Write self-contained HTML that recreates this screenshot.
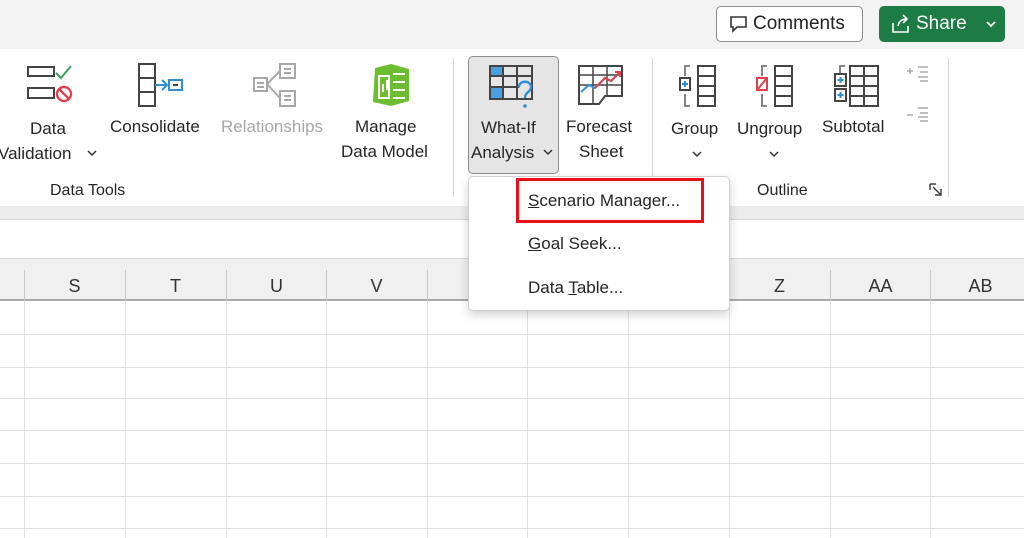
<!DOCTYPE html>
<html><head><meta charset="utf-8"><style>
*{margin:0;padding:0;box-sizing:border-box}
body{width:1024px;height:538px;overflow:hidden;position:relative;background:#fff;font-family:"Liberation Sans",sans-serif;color:#262626}
.a{position:absolute}
.t{position:absolute;font-size:17px;line-height:25px;text-align:center;white-space:nowrap}
.c{position:absolute;top:276px;font-size:18px;width:101px;text-align:center;color:#333}
.vl{position:absolute;top:301px;bottom:0;width:1px;background:#e1e1e1}
.hl{position:absolute;left:0;right:0;height:1px;background:#e1e1e1}
.hv{position:absolute;top:270px;height:31px;width:1px;background:#c8c8c8}
.ch{position:absolute}
</style></head><body>
<div class="a" style="left:0;top:0;width:1024px;height:49px;background:#f3f3f3"></div>
<div class="a" style="left:716px;top:6px;width:147px;height:36px;border:1px solid #8d8d8d;border-radius:5px;background:#fff"></div>
<svg class="a" style="left:729px;top:15px" width="20" height="18"><path d="M2 2h15v10H8l-4 4v-4H2z" fill="none" stroke="#333" stroke-width="1.6"/></svg>
<div class="t" style="left:753px;top:11px;font-size:19px;color:#222">Comments</div>
<div class="a" style="left:879px;top:6px;width:126px;height:36px;border-radius:5px;background:#1d7b44"></div>
<svg class="a" style="left:890px;top:14px" width="22" height="20"><path d="M3 9v9h15v-6M8 12c1-5 4-7 9-7M13 1l4 4-4 4" fill="none" stroke="#fff" stroke-width="1.6"/></svg>
<div class="t" style="left:916px;top:11px;font-size:19px;color:#fff">Share</div>
<svg class="a" style="left:985px;top:20px" width="12" height="8"><path d="M2 2l4 4 4-4" fill="none" stroke="#fff" stroke-width="1.8"/></svg>

<div class="a" style="left:0;top:49px;width:1024px;height:157px;background:#fff;box-shadow:0 2px 3px rgba(0,0,0,.15)"></div>
<div class="a" style="left:0;top:206px;width:1024px;height:14px;background:#ececec"></div>
<div class="a" style="left:0;top:219px;width:1024px;height:1px;background:#d6d6d6"></div>
<div class="a" style="left:0;top:220px;width:1024px;height:38px;background:#fff"></div>
<div class="a" style="left:0;top:258px;width:1024px;height:1px;background:#d6d6d6"></div>
<div class="a" style="left:0;top:259px;width:1024px;height:42px;background:#f0f0f0;border-bottom:2px solid #a8a8a8"></div>

<svg class="a" style="left:26px;top:63px" width="52" height="45"><path d="M2 4h26v9H2z" fill="none" stroke="#444" stroke-width="2"/><path d="M30 10l5 5 10-12" fill="none" stroke="#3ca55c" stroke-width="2"/><path d="M2 25h26v10H2z" fill="none" stroke="#444" stroke-width="2"/><circle cx="38" cy="31" r="7" fill="none" stroke="#e0424d" stroke-width="2.4"/><path d="M33 26l10 10" stroke="#e0424d" stroke-width="2.4"/></svg>
<div class="t" style="left:30px;top:116px">Data</div>
<div class="t" style="left:-2px;top:141px">Validation</div>
<svg class="ch" style="left:87px;top:150px" width="10" height="7"><path d="M1 1l4 4 4-4" fill="none" stroke="#333" stroke-width="1.5"/></svg>
<svg class="a" style="left:136px;top:62px" width="50" height="45"><path d="M3 2h16v14H3zM3 16h16v14H3zM3 30h16v14H3z" fill="none" stroke="#444" stroke-width="2"/><path d="M19 23h12M26 18l5 5-5 5" fill="none" stroke="#2e8fd6" stroke-width="2"/><path d="M33 18h13v10H33z" fill="none" stroke="#2e8fd6" stroke-width="2"/><path d="M37 23h5" stroke="#444" stroke-width="2"/></svg>
<div class="t" style="left:110px;top:114px">Consolidate</div>
<svg class="a" style="left:252px;top:62px" width="48" height="46"><g fill="none" stroke="#a8a8a8" stroke-width="2"><path d="M2 16h13v13H2zM28 2h15v14H28zM28 29h15v15H28zM15 22l13-13M15 22l13 14"/><path d="M5 21h7M5 25h7M32 7h7M32 11h7M32 34h7M32 38h7"/></g></svg>
<div class="t" style="left:221px;top:114px;color:#a8a8a8">Relationships</div>
<svg class="a" style="left:367px;top:62px" width="46" height="46"><path d="M8 6l16-4 18 5v32l-18 5L6 40z" fill="#6cbd2f"/><path d="M12 14h10v22H12zM26 12h12M26 20h12M26 28h12M26 36h12" fill="none" stroke="#fff" stroke-width="2"/><path d="M16 22v8M20 18v10" stroke="#fff" stroke-width="2"/></svg>
<div class="t" style="left:355px;top:114px">Manage</div>
<div class="t" style="left:341px;top:139px">Data Model</div>
<div class="a" style="left:453px;top:58px;width:1px;height:139px;background:#d4d4d4"></div>

<div class="a" style="left:468px;top:56px;width:91px;height:118px;background:#e5e5e5;border:1.5px solid #8c8c8c;border-radius:5px"></div>
<svg class="a" style="left:489px;top:65px" width="52" height="48"><path d="M1 1h13v10H1zM1 22h13v12H1z" fill="#4a9fe0"/><path d="M1 1h42v33H1zM14 1v33M28 1v33M1 11h42M1 22h42" fill="none" stroke="#444" stroke-width="2"/><path d="M30 22c0-7 12-7 12 0 0 5-6 5-6 11" fill="#e5e5e5" stroke="#2e8fd6" stroke-width="2.4"/><circle cx="36" cy="41" r="1.8" fill="#2e8fd6"/></svg>
<div class="t" style="left:481px;top:115px">What-If</div>
<div class="t" style="left:471px;top:140px">Analysis</div>
<svg class="ch" style="left:543px;top:149px" width="10" height="7"><path d="M1 1l4 4 4-4" fill="none" stroke="#333" stroke-width="1.5"/></svg>
<svg class="a" style="left:577px;top:64px" width="48" height="44"><path d="M2 2h43v30H28l-6 8H2z" fill="none" stroke="#444" stroke-width="2"/><path d="M2 11h43M2 21h43M16 2v38M30 2v30" stroke="#444" stroke-width="1.5"/><path d="M4 28l8-7 6 3 10-10 6 3 9-9" fill="none" stroke="#2e8fd6" stroke-width="2"/><path d="M18 24l10-10 6 3 9-9M38 8h5v5" fill="none" stroke="#e0424d" stroke-width="2"/></svg>
<div class="t" style="left:566px;top:114px">Forecast</div>
<div class="t" style="left:579px;top:139px">Sheet</div>
<div class="a" style="left:652px;top:58px;width:1px;height:139px;background:#d4d4d4"></div>

<svg class="a" style="left:678px;top:64px" width="42" height="46"><path d="M12 2H7v10M7 30v12h5" fill="none" stroke="#777" stroke-width="1.8"/><path d="M2 14h10v12H2z" fill="#fff" stroke="#444" stroke-width="2"/><path d="M7 17v6M4 20h6" stroke="#2e8fd6" stroke-width="2"/><path d="M20 2h17v40H20zM20 12h17M20 22h17M20 32h17" fill="none" stroke="#444" stroke-width="2"/></svg>
<div class="t" style="left:671px;top:116px">Group</div>
<svg class="ch" style="left:692px;top:151px" width="10" height="7"><path d="M1 1l4 4 4-4" fill="none" stroke="#333" stroke-width="1.5"/></svg>
<svg class="a" style="left:755px;top:64px" width="42" height="46"><path d="M12 2H7v10M7 30v12h5" fill="none" stroke="#777" stroke-width="1.8"/><path d="M2 14h10v12H2z" fill="#fff" stroke="#e0424d" stroke-width="2"/><path d="M3 25l8-10" stroke="#e0424d" stroke-width="2"/><path d="M20 2h17v40H20zM20 12h17M20 22h17M20 32h17" fill="none" stroke="#444" stroke-width="2"/></svg>
<div class="t" style="left:737px;top:116px">Ungroup</div>
<svg class="ch" style="left:769px;top:151px" width="10" height="7"><path d="M1 1l4 4 4-4" fill="none" stroke="#333" stroke-width="1.5"/></svg>
<svg class="a" style="left:833px;top:64px" width="48" height="46"><path d="M12 2H7v8" fill="none" stroke="#777" stroke-width="1.8"/><path d="M2 10h11v12H2zM2 25h11v12H2z" fill="#fff" stroke="#444" stroke-width="2"/><path d="M7.5 13v6M4.5 16h6M7.5 28v6M4.5 31h6" stroke="#2e8fd6" stroke-width="2"/><path d="M17 2h28v40H17zM17 12h28M17 22h28M17 32h28M31 2v40" fill="none" stroke="#444" stroke-width="2"/></svg>
<div class="t" style="left:822px;top:114px">Subtotal</div>
<svg class="a" style="left:906px;top:63px" width="26" height="60"><g stroke="#aaa" stroke-width="1.5"><path d="M1 8h6M4 5v6M12 4h10M14 9h8M12 14h10M14 18h8M1 52h6M12 45h10M14 50h8M12 54h10M14 58h8"/></g></svg>
<div class="t" style="left:50px;top:178px;font-size:16px">Data Tools</div>
<div class="t" style="left:757px;top:178px;font-size:16px">Outline</div>
<svg class="a" style="left:929px;top:183px" width="14" height="14"><path d="M1 1h6M1 1v6M4 4l8 8M6 12h6V6" fill="none" stroke="#444" stroke-width="1.5"/></svg>
<div class="a" style="left:948px;top:58px;width:1px;height:139px;background:#d4d4d4"></div>

<div class="hv" style="left:24px"></div><div class="hv" style="left:125px"></div><div class="hv" style="left:226px"></div><div class="hv" style="left:326px"></div><div class="hv" style="left:427px"></div><div class="hv" style="left:729px"></div><div class="hv" style="left:830px"></div><div class="hv" style="left:930px"></div>
<div class="c" style="left:24px">S</div><div class="c" style="left:125px">T</div><div class="c" style="left:226px">U</div><div class="c" style="left:326px">V</div><div class="c" style="left:729px">Z</div><div class="c" style="left:830px">AA</div><div class="c" style="left:930px">AB</div>
<div class="vl" style="left:24px"></div><div class="vl" style="left:125px"></div><div class="vl" style="left:226px"></div><div class="vl" style="left:326px"></div><div class="vl" style="left:427px"></div><div class="vl" style="left:527px"></div><div class="vl" style="left:628px"></div><div class="vl" style="left:729px"></div><div class="vl" style="left:830px"></div><div class="vl" style="left:930px"></div>
<div class="hl" style="top:334px"></div><div class="hl" style="top:367px"></div><div class="hl" style="top:398px"></div><div class="hl" style="top:430px"></div><div class="hl" style="top:463px"></div><div class="hl" style="top:496px"></div><div class="hl" style="top:528px"></div>

<div class="a" style="left:468px;top:176px;width:262px;height:135px;background:#fff;border:1px solid #d0d0d0;border-radius:5px;box-shadow:0 4px 10px rgba(0,0,0,.18)"></div>
<div class="a" style="left:516px;top:178px;width:188px;height:45px;border:3px solid #e8101a"></div>
<div class="t" style="left:528px;top:188px"><u>S</u>cenario Manager...</div>
<div class="t" style="left:528px;top:231px"><u>G</u>oal Seek...</div>
<div class="t" style="left:528px;top:275px">Data <u>T</u>able...</div>
</body></html>
